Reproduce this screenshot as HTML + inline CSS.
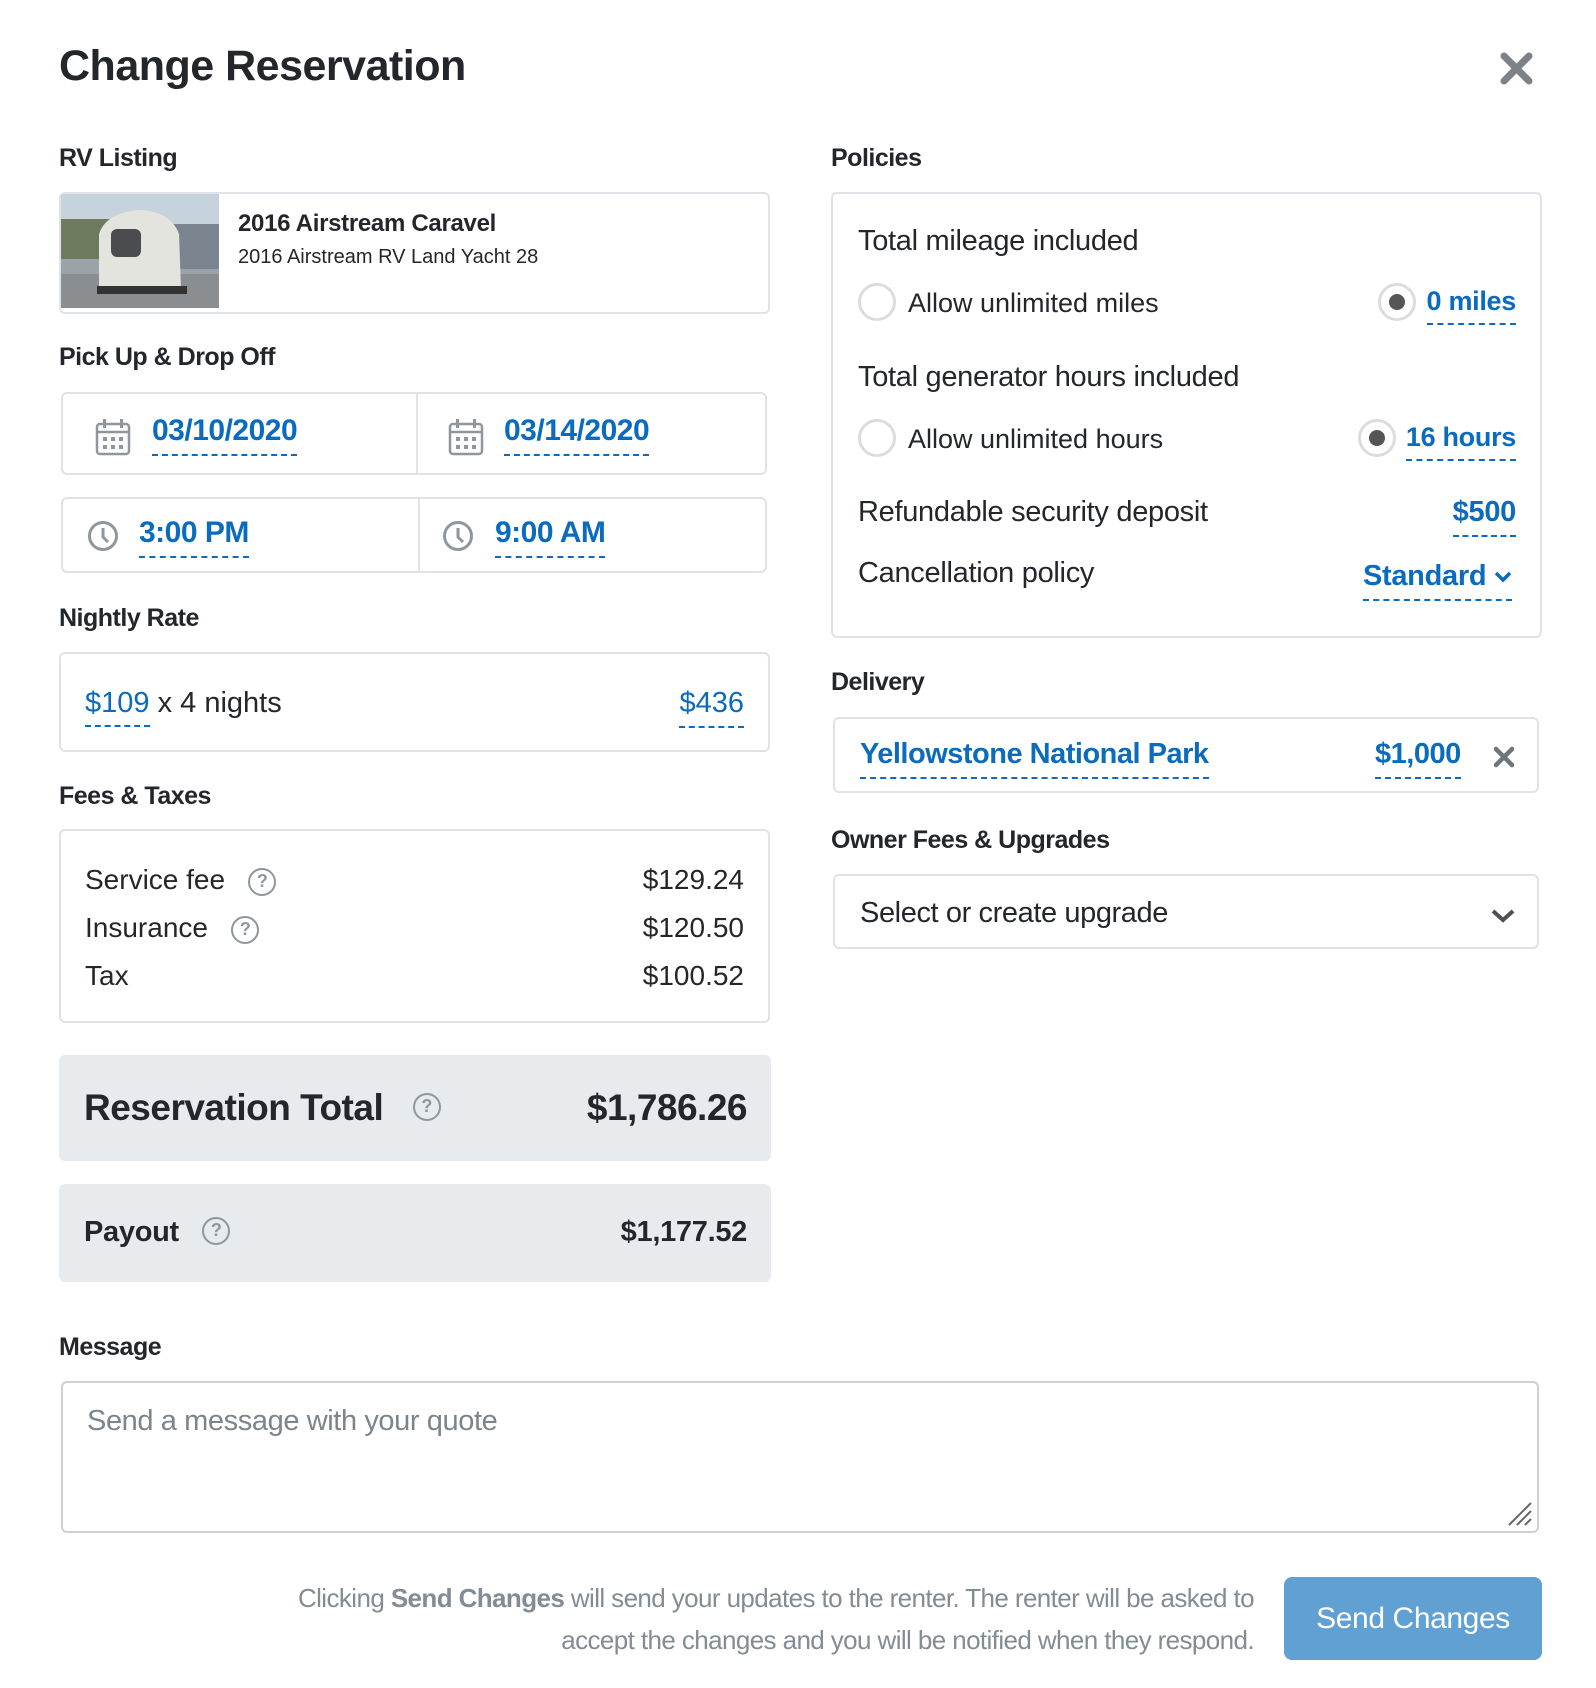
<!DOCTYPE html>
<html><head><meta charset="utf-8"><style>
*{box-sizing:border-box;margin:0;padding:0}
body{width:1596px;height:1688px;background:#fff;font-family:"Liberation Sans",sans-serif;color:#23272b;position:relative;overflow:hidden}
.a{position:absolute;white-space:nowrap}
.lbl{font-size:25px;font-weight:bold;letter-spacing:-0.5px}
.box{position:absolute;border:2px solid #dfe2e6;border-radius:6px;background:#fff}
.lnk{color:#0b6bbf;border-bottom:2px dashed #0b6bbf;padding-bottom:6px}
.b{font-weight:bold}
.radio{position:absolute;width:38px;height:38px;border-radius:50%;border:3px solid #dcdcdc;background:#fff}
.radio.on::after{content:"";position:absolute;left:8px;top:8px;width:16px;height:16px;border-radius:50%;background:#555}
.q{display:inline-block;width:28px;height:28px;border:2.5px solid #8e969e;border-radius:50%;color:#8e969e;font-size:18px;font-weight:bold;text-align:center;line-height:23px;vertical-align:middle}
.gray{position:absolute;background:#e8ebee;border-radius:6px}
</style></head><body>

<div class="a b" style="left:59px;top:42px;font-size:43px;letter-spacing:-0.5px">Change Reservation</div>
<svg class="a" style="left:1500px;top:52px" width="33" height="33" viewBox="0 0 33 33"><path d="M4 4L29 29M29 4L4 29" stroke="#7c8288" stroke-width="7" stroke-linecap="round"/></svg>

<!-- Left column -->
<div class="a lbl" style="left:59px;top:144px">RV Listing</div>
<div class="box" style="left:59px;top:192px;width:711px;height:122px;overflow:hidden">
 <svg style="position:absolute;left:0;top:0" width="158" height="114" viewBox="0 0 158 114">
  <rect width="158" height="114" fill="#9aa3a8"/>
  <rect width="158" height="40" fill="#c7d3dc"/>
  <rect x="0" y="25" width="50" height="40" fill="#6d7a5e"/>
  <rect x="110" y="30" width="48" height="45" fill="#7a8590"/>
  <rect x="0" y="80" width="158" height="34" fill="#8a8e90"/>
  <path d="M38 95 L38 40 Q45 18 80 16 Q110 18 118 40 L120 95 Z" fill="#e4e4df"/>
  <rect x="50" y="35" width="30" height="28" rx="6" fill="#4a4c50"/>
  <rect x="36" y="92" width="90" height="8" fill="#333"/>
 </svg>
 <div class="a b" style="left:177px;top:16px;font-size:24px;letter-spacing:-0.3px">2016 Airstream Caravel</div>
 <div class="a" style="left:177px;top:52px;font-size:20px">2016 Airstream RV Land Yacht 28</div>
</div>

<div class="a lbl" style="left:59px;top:343px">Pick Up &amp; Drop Off</div>
<div class="box" style="left:61px;top:392px;width:706px;height:83px">
 <div style="position:absolute;left:353px;top:0;bottom:0;border-left:2px solid #dfe2e6"></div>
 <svg class="a" style="left:32px;top:24px" width="36" height="38" viewBox="0 0 36 38"><rect x="2" y="6" width="32" height="30" rx="3" fill="none" stroke="#8e969e" stroke-width="2.5"/><line x1="2" y1="14" x2="34" y2="14" stroke="#8e969e" stroke-width="2.5"/><rect x="8" y="1" width="3" height="9" fill="#8e969e"/><rect x="25" y="1" width="3" height="9" fill="#8e969e"/><g fill="#8e969e"><rect x="8" y="19" width="4" height="4"/><rect x="16" y="19" width="4" height="4"/><rect x="24" y="19" width="4" height="4"/><rect x="8" y="27" width="4" height="4"/><rect x="16" y="27" width="4" height="4"/><rect x="24" y="27" width="4" height="4"/></g></svg>
 <div class="a lnk b" style="left:89px;top:20px;font-size:30px;letter-spacing:-0.5px">03/10/2020</div>
 <svg class="a" style="left:385px;top:24px" width="36" height="38" viewBox="0 0 36 38"><rect x="2" y="6" width="32" height="30" rx="3" fill="none" stroke="#8e969e" stroke-width="2.5"/><line x1="2" y1="14" x2="34" y2="14" stroke="#8e969e" stroke-width="2.5"/><rect x="8" y="1" width="3" height="9" fill="#8e969e"/><rect x="25" y="1" width="3" height="9" fill="#8e969e"/><g fill="#8e969e"><rect x="8" y="19" width="4" height="4"/><rect x="16" y="19" width="4" height="4"/><rect x="24" y="19" width="4" height="4"/><rect x="8" y="27" width="4" height="4"/><rect x="16" y="27" width="4" height="4"/><rect x="24" y="27" width="4" height="4"/></g></svg>
 <div class="a lnk b" style="left:441px;top:20px;font-size:30px;letter-spacing:-0.5px">03/14/2020</div>
</div>
<div class="box" style="left:61px;top:497px;width:706px;height:76px">
 <div style="position:absolute;left:355px;top:0;bottom:0;border-left:2px solid #dfe2e6"></div>
 <svg class="a" style="left:24px;top:21px" width="32" height="32" viewBox="0 0 32 32"><circle cx="16" cy="16" r="13.5" fill="none" stroke="#8e969e" stroke-width="3"/><path d="M16 8V17L21 22" fill="none" stroke="#8e969e" stroke-width="3"/></svg>
 <div class="a lnk b" style="left:76px;top:17px;font-size:30px;letter-spacing:-0.5px">3:00 PM</div>
 <svg class="a" style="left:379px;top:21px" width="32" height="32" viewBox="0 0 32 32"><circle cx="16" cy="16" r="13.5" fill="none" stroke="#8e969e" stroke-width="3"/><path d="M16 8V17L21 22" fill="none" stroke="#8e969e" stroke-width="3"/></svg>
 <div class="a lnk b" style="left:432px;top:17px;font-size:30px;letter-spacing:-0.5px">9:00 AM</div>
</div>

<div class="a lbl" style="left:59px;top:604px">Nightly Rate</div>
<div class="box" style="left:59px;top:652px;width:711px;height:100px">
 <div class="a" style="left:24px;top:33px;font-size:29px"><span class="lnk">$109</span> x 4 nights</div>
 <div class="a lnk" style="right:24px;top:33px;font-size:29px">$436</div>
</div>

<div class="a lbl" style="left:59px;top:782px">Fees &amp; Taxes</div>
<div class="box" style="left:59px;top:829px;width:711px;height:194px;font-size:28px">
 <div class="a" style="left:24px;top:33px">Service fee &nbsp;&nbsp;<span class="q">?</span></div>
 <div class="a" style="right:24px;top:33px">$129.24</div>
 <div class="a" style="left:24px;top:81px">Insurance &nbsp;&nbsp;<span class="q">?</span></div>
 <div class="a" style="right:24px;top:81px">$120.50</div>
 <div class="a" style="left:24px;top:129px">Tax</div>
 <div class="a" style="right:24px;top:129px">$100.52</div>
</div>

<div class="gray" style="left:59px;top:1055px;width:712px;height:106px">
 <div class="a b" style="left:25px;top:32px;font-size:37px;letter-spacing:-0.5px">Reservation Total &nbsp;&nbsp;<span class="q" style="margin-top:-6px">?</span></div>
 <div class="a b" style="right:24px;top:32px;font-size:37px;letter-spacing:-0.5px">$1,786.26</div>
</div>
<div class="gray" style="left:59px;top:1184px;width:712px;height:98px">
 <div class="a b" style="left:25px;top:32px;font-size:29px;letter-spacing:-0.3px">Payout &nbsp;&nbsp;<span class="q" style="margin-top:-4px">?</span></div>
 <div class="a b" style="right:24px;top:32px;font-size:29px;letter-spacing:-0.3px">$1,177.52</div>
</div>

<!-- Right column -->
<div class="a lbl" style="left:831px;top:144px">Policies</div>
<div class="box" style="left:831px;top:192px;width:711px;height:446px;font-size:29px">
 <div class="a" style="left:25px;top:31px;letter-spacing:-0.3px">Total mileage included</div>
 <div class="radio" style="left:25px;top:89px"></div>
 <div class="a" style="left:75px;top:94px;font-size:27px">Allow unlimited miles</div>
 <div class="radio on" style="left:545px;top:89px"></div>
 <div class="a lnk b" style="right:24px;top:92px;font-size:27px;letter-spacing:-0.3px">0 miles</div>
 <div class="a" style="left:25px;top:167px;letter-spacing:-0.3px">Total generator hours included</div>
 <div class="radio" style="left:25px;top:225px"></div>
 <div class="a" style="left:75px;top:230px;font-size:27px">Allow unlimited hours</div>
 <div class="radio on" style="left:525px;top:225px"></div>
 <div class="a lnk b" style="right:24px;top:228px;font-size:27px;letter-spacing:-0.3px">16 hours</div>
 <div class="a" style="left:25px;top:302px;letter-spacing:-0.3px">Refundable security deposit</div>
 <div class="a lnk b" style="right:24px;top:302px;letter-spacing:-0.3px">$500</div>
 <div class="a" style="left:25px;top:363px;letter-spacing:-0.3px">Cancellation policy</div>
 <div class="a lnk b" style="right:28px;top:366px;letter-spacing:-0.3px">Standard <svg width="18" height="12" viewBox="0 0 18 12" style="vertical-align:middle"><path d="M2 2L9 9L16 2" fill="none" stroke="#0b6bbf" stroke-width="3.5"/></svg></div>
</div>

<div class="a lbl" style="left:831px;top:668px">Delivery</div>
<div class="box" style="left:833px;top:717px;width:706px;height:76px">
 <div class="a lnk b" style="left:25px;top:19px;font-size:29px;letter-spacing:-0.5px">Yellowstone National Park</div>
 <div class="a lnk b" style="left:540px;top:19px;font-size:29px;letter-spacing:-0.5px">$1,000</div>
 <svg class="a" style="left:658px;top:27px" width="22" height="22" viewBox="0 0 22 22"><path d="M3 3L19 19M19 3L3 19" stroke="#6f757b" stroke-width="4.5" stroke-linecap="round"/></svg>
</div>

<div class="a lbl" style="left:831px;top:826px">Owner Fees &amp; Upgrades</div>
<div class="box" style="left:833px;top:874px;width:706px;height:75px">
 <div class="a" style="left:25px;top:21px;font-size:29px;letter-spacing:-0.4px">Select or create upgrade</div>
 <svg class="a" style="left:655px;top:32px" width="26" height="16" viewBox="0 0 26 16"><path d="M3 3L13 12L23 3" fill="none" stroke="#4b5157" stroke-width="4"/></svg>
</div>

<!-- Message -->
<div class="a lbl" style="left:59px;top:1333px">Message</div>
<div class="box" style="left:61px;top:1381px;width:1478px;height:152px;border-color:#cdd1d5">
 <div class="a" style="left:24px;top:22px;font-size:29px;color:#7c848c;letter-spacing:-0.4px">Send a message with your quote</div>
 <svg class="a" style="right:4px;bottom:4px" width="26" height="26" viewBox="0 0 26 26"><path d="M2 24L24 2M10 24L24 10M18 24L24 18" stroke="#666" stroke-width="2"/></svg>
</div>

<div class="a" style="right:342px;top:1577px;font-size:26px;color:#838c95;text-align:right;line-height:42px;letter-spacing:-0.6px">Clicking <b>Send Changes</b> will send your updates to the renter. The renter will be asked to<br>accept the changes and you will be notified when they respond.</div>
<div class="a" style="left:1284px;top:1577px;width:258px;height:83px;background:#60a0d2;border-radius:8px;color:#fff;font-size:30px;text-align:center;line-height:83px;letter-spacing:-0.4px">Send Changes</div>

</body></html>
